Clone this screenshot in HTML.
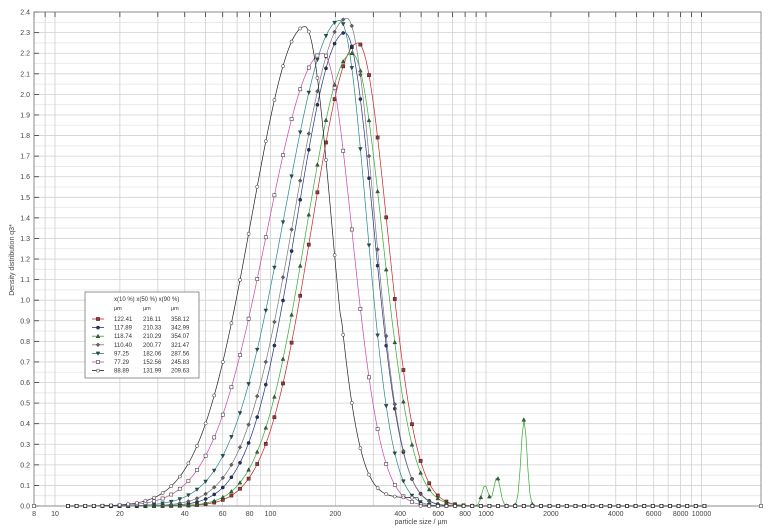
<!DOCTYPE html>
<html><head><meta charset="utf-8"><style>
html,body{margin:0;padding:0;background:#fff;width:768px;height:529px;overflow:hidden}
svg{display:block;font-family:"Liberation Sans",sans-serif}
</style></head><body>
<svg id="s" width="768" height="529" xmlns="http://www.w3.org/2000/svg"></svg>
<script>
var s=document.getElementById('s'),h='';
function X(d){return 55+215.5*Math.log10(d/10);}
function Y(v){return 506-205.8*v;}
var L=34,R=761,T=12,B=506;
for(var i=0;i<=48;i++){var y=Y(i*0.05);h+='<line x1="'+L+'" x2="'+R+'" y1="'+y+'" y2="'+y+'" stroke="'+(i%2?'#e6e6e6':'#d2d2d2')+'" stroke-width="0.8"/>';}
var dec=[1,10,100,1000,10000];
dec.forEach(function(b){for(var m=1;m<10;m++){var d=b*m;var x=X(d);if(x<L||x>R)continue;h+='<line x1="'+x+'" x2="'+x+'" y1="'+T+'" y2="'+B+'" stroke="#d0d0d0" stroke-width="0.8"/>';h+='<line x1="'+x+'" x2="'+x+'" y1="'+T+'" y2="'+(T+5)+'" stroke="#333" stroke-width="0.8"/>';}});
for(var i=0;i<=24;i++){h+='<line x1="'+L+'" x2="'+(L+5)+'" y1="'+Y(i*0.1)+'" y2="'+Y(i*0.1)+'" stroke="#333" stroke-width="0.8"/>';
h+='<text x="30" y="'+(Y(i*0.1)+2.5)+'" font-size="7" fill="#444" text-anchor="end">'+(i/10).toFixed(1)+'</text>';}
h+='<rect x="'+L+'" y="'+T+'" width="'+(R-L)+'" height="'+(B-T)+'" fill="none" stroke="#777" stroke-width="0.8"/>';
[8,10,20,40,60,80,100,200,400,600,800,1000,2000,4000,6000,8000,10000].forEach(function(d){h+='<text x="'+X(d)+'" y="516" font-size="7" fill="#444" text-anchor="middle">'+d+'</text>';});
h+='<text x="421" y="524" font-size="7" fill="#444" text-anchor="middle">particle size / µm</text>';
h+='<text transform="translate(14,260) rotate(-90)" font-size="7" fill="#444" text-anchor="middle">Density distribution q3*</text>';
var C=[
{c:'#cc2222',m:'sq',f:'#b03030',p:358,a:2.25,l:46,r:29},
{c:'#223388',m:'ci',f:'#223366',p:345,a:2.3,l:48,r:28},
{c:'#33aa33',m:'tr',f:'#336633',p:352,a:2.2,l:46,r:30},
{c:'#777777',m:'di',f:'#666',p:347,a:2.37,l:52,r:27},
{c:'#228888',m:'tv',f:'#225555',p:340,a:2.36,l:55,r:26},
{c:'#cc44aa',m:'sq',f:'#fff',p:323,a:2.2,l:56,r:29},
{c:'#222222',m:'ci',f:'#fff',p:305,a:2.33,l:53,r:26}];
function mk(t,x,y,f){if(t=='sq')return '<rect x="'+(x-1.6)+'" y="'+(y-1.6)+'" width="3.2" height="3.2" fill="'+f+'" stroke="#222" stroke-width="0.5"/>';
if(t=='ci')return '<circle cx="'+x+'" cy="'+y+'" r="1.6" fill="'+f+'" stroke="#222" stroke-width="0.5"/>';
if(t=='tr')return '<path d="M'+x+' '+(y-2)+'L'+(x+1.9)+' '+(y+1.5)+'L'+(x-1.9)+' '+(y+1.5)+'Z" fill="'+f+'" stroke="#222" stroke-width="0.4"/>';
if(t=='tv')return '<path d="M'+x+' '+(y+2)+'L'+(x+1.9)+' '+(y-1.5)+'L'+(x-1.9)+' '+(y-1.5)+'Z" fill="'+f+'" stroke="#222" stroke-width="0.4"/>';
return '<path d="M'+x+' '+(y-1.9)+'L'+(x+1.9)+' '+y+'L'+x+' '+(y+1.9)+'L'+(x-1.9)+' '+y+'Z" fill="'+f+'" stroke="#222" stroke-width="0.4"/>';}
function val(c,k,x){var sg=x<c.p?c.l:c.r;var v=c.a*Math.exp(-(x-c.p)*(x-c.p)/(2*sg*sg));
if(k==2){v+=0.1*Math.exp(-Math.pow(x-485,2)/20)+0.14*Math.exp(-Math.pow(x-497,2)/20)+0.42*Math.exp(-Math.pow(x-524,2)/18);}
if(k==6&&x>340&&x<420){v+=0.04;}return v;}
C.forEach(function(c,k){var pts=[],ms='';for(var x=68;x<=706;x+=8.6){var y=Y(val(c,k,x));ms+=mk(c.m,x.toFixed(1)*1,y,c.f);}
for(var x=68;x<=706;x+=2){pts.push(x+','+Y(val(c,k,x)).toFixed(1));}
h+='<polyline points="'+pts.join(' ')+'" fill="none" stroke="'+c.c+'" stroke-width="0.7"/>'+ms;});
h+=mk('sq',761,506,'#fff')+mk('sq',34,506,'#fff');
h+='<rect x="85" y="292" width="114" height="86" fill="#fff" stroke="#666" stroke-width="0.7"/>';
h+='<text x="114" y="301" font-size="6" fill="#333">x(10 %) x(50 %) x(90 %)</text>';
h+='<text x="114" y="310" font-size="5.5" fill="#333">µm</text><text x="143" y="310" font-size="5.5" fill="#333">µm</text><text x="171" y="310" font-size="5.5" fill="#333">µm</text>';
var rows=[['122.41','216.11','358.12'],['117.89','210.33','342.99'],['118.74','210.29','354.07'],['110.40','200.77','321.47'],['97.25','182.06','287.56'],['77.29','152.56','245.83'],['88.89','131.99','209.63']];
rows.forEach(function(r,i){var y=319+i*8.6;h+='<line x1="92" x2="104" y1="'+y+'" y2="'+y+'" stroke="'+C[i].c+'" stroke-width="0.8"/>'+mk(C[i].m,98,y,C[i].f);
h+='<text x="114" y="'+(y+2)+'" font-size="6" fill="#333">'+r[0]+'</text><text x="143" y="'+(y+2)+'" font-size="6" fill="#333">'+r[1]+'</text><text x="171" y="'+(y+2)+'" font-size="6" fill="#333">'+r[2]+'</text>';});
s.innerHTML=h;
</script>
</body></html>
